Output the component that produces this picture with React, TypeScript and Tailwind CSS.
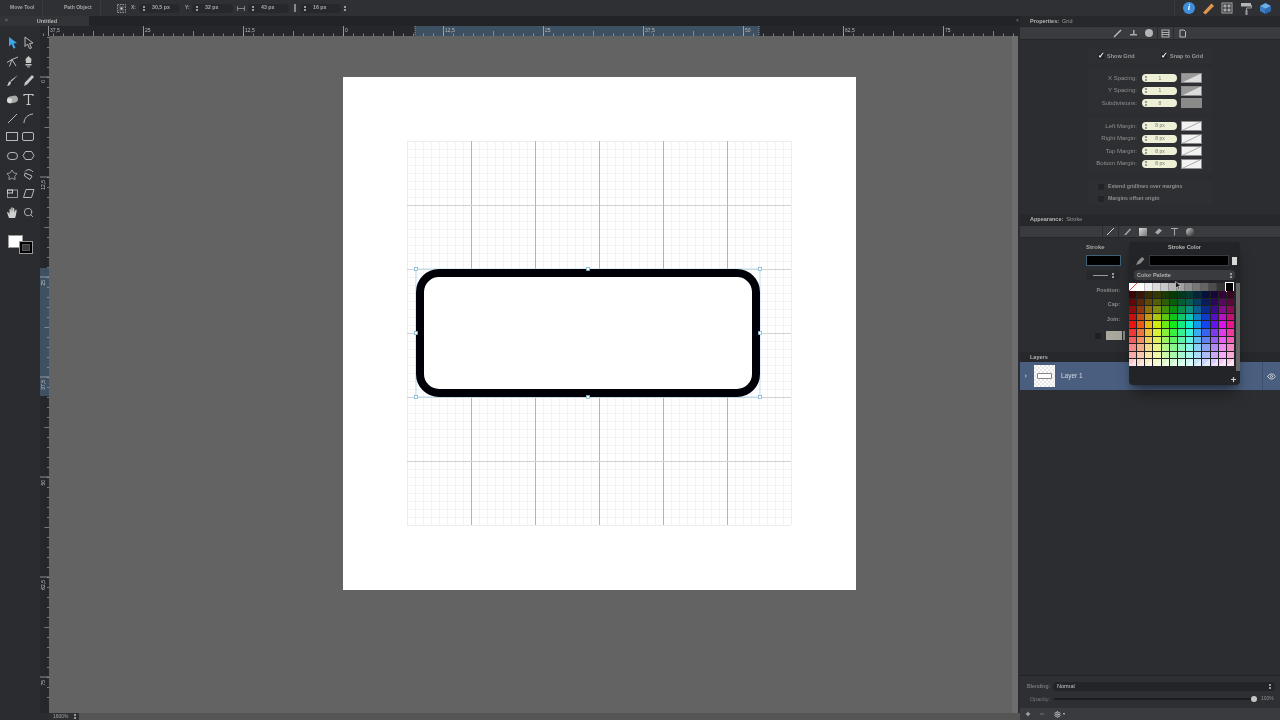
import { Search, Star, Eye, Plus, Minus, Settings, ChevronRight } from "lucide-react";
import type { ReactNode } from "react";

const font = "font-['Liberation_Sans',Arial,sans-serif]";

function Stepper({ className = "" }: { className?: string }) {
  return (
    <span className={`flex flex-col gap-[1px] ${className}`}>
      <span className="h-[2px] w-[2px] bg-[#9a9a9a]" />
      <span className="h-[2px] w-[2px] bg-[#9a9a9a]" />
    </span>
  );
}

function TopField({ value, width }: { value: string; width: string }) {
  return (
    <div className={`flex h-[9px] items-center rounded-sm bg-[#27282b] pl-1 ${width}`}>
      <Stepper />
      <span className="ml-[7px] text-[5.3px] font-bold text-[#a9a9a9]">{value}</span>
    </div>
  );
}

function TopBar() {
  return (
    <div className="flex h-4 items-center bg-[#2f3034] text-[5px] font-bold text-[#a5a5a5]">
      <span className="ml-[10px] w-[32px]">Move Tool</span>
      <span className="h-full w-px bg-[#3a3b3f]" />
      <span className="ml-[21px] w-[36px]">Path Object</span>
      <span className="h-full w-px bg-[#3a3b3f]" />
      <svg className="ml-4 h-[9px] w-[9px]" viewBox="0 0 9 9">
        <rect x=".5" y=".5" width="8" height="8" fill="none" stroke="#999" strokeDasharray="1.5 1" />
        <path d="M3 .5v8M6 .5v8M.5 3h8M.5 6h8" stroke="#777" strokeWidth=".5" />
        <rect x="3.5" y="3.5" width="2" height="2" fill="#ddd" />
      </svg>
      <span className="ml-[5px] w-[8px]">X:</span>
      <TopField value="30,5 px" width="w-[41px]" />
      <span className="ml-[5px] w-[7px]">Y:</span>
      <TopField value="32 px" width="w-[41px]" />
      <svg className="ml-1 mr-[3px] h-[5px] w-[8px]" viewBox="0 0 8 5" fill="none" stroke="#999" strokeWidth=".8"><path d="M.5 0v5M7.5 0v5M.5 2.5h7" /></svg>
      <TopField value="43 px" width="w-[41px]" />
      <span className="ml-[5px] h-[8px] w-[2px] bg-[#888]" />
      <span className="w-[4px]" />
      <TopField value="16 px" width="w-[41px]" />
      <Stepper className="ml-[3px]" />
      <div className="ml-auto flex h-full items-center">
        <span className="h-full w-px bg-[#3a3b3f]" />
        <span className="ml-2 flex h-[12px] w-[12px] items-center justify-center rounded-full bg-[#3f8fdf] font-['Liberation_Serif',serif] text-[9px] italic font-bold text-white">i</span>
        <svg className="ml-[7px] h-[13px] w-[13px]" viewBox="0 0 13 13">
          <path d="M1 10.5 9.5 1.5 12 4 3.5 12.5Z" fill="#df9650" />
        </svg>
        <svg className="ml-[6px] h-[12px] w-[12px]" viewBox="0 0 12 12" fill="none">
          <rect x="1" y="1" width="10" height="10" stroke="#aaa" />
          <rect x="2.5" y="2.5" width="3" height="3" fill="#aaa" />
          <rect x="6.5" y="2.5" width="3" height="3" fill="#aaa" />
          <rect x="2.5" y="6.5" width="3" height="3" fill="#aaa" />
          <rect x="6.5" y="6.5" width="3" height="3" fill="#aaa" />
        </svg>
        <svg className="ml-[7px] h-[13px] w-[13px]" viewBox="0 0 13 13">
          <rect x="1" y="1" width="10" height="3.5" fill="#b5b5b5" />
          <path d="M11.5 3v3H6.5v2" fill="none" stroke="#999" />
          <rect x="5.5" y="8" width="2" height="5" fill="#999" />
        </svg>
        <svg className="ml-[6px] mr-2 h-[13px] w-[13px]" viewBox="0 0 13 13">
          <path d="M6.5 1 12 4 6.5 7 1 4Z" fill="#6bb0ea" />
          <path d="M1 4v5l5.5 3V7Z" fill="#3a80c8" />
          <path d="M12 4v5l-5.5 3V7Z" fill="#2e6bb0" />
        </svg>
      </div>
    </div>
  );
}

function Tool({ children }: { children: ReactNode }) {
  return <div className="flex items-center justify-center text-[#b9b9b9]">{children}</div>;
}

function ToolBox() {
  const box = "h-[13px] w-[13px]";
  return (
    <div className="flex w-10 shrink-0 flex-col bg-[#2b2c30]">
      <div className="mt-[7px] ml-1 grid w-[32px] grid-cols-2 auto-rows-[18.9px]">
        <Tool>
          <svg className={box} viewBox="0 0 13 13"><path d="M3 1 11 7 7.5 7.5 9.5 12 7.5 12.5 5.5 8 3 10.5Z" fill="#3ea6e8" /></svg>
        </Tool>
        <Tool>
          <svg className={box} viewBox="0 0 13 13"><path d="M3 1 11 7 7.5 7.5 9.5 12 7.5 12.5 5.5 8 3 10.5Z" fill="none" stroke="#b9b9b9" /></svg>
        </Tool>
        <Tool>
          <svg className={box} viewBox="0 0 13 13" fill="none" stroke="#b9b9b9"><path d="M1 7.5 6 4.5 12 2M6 4.5 3.5 11.5M6 4.5 10 11" /></svg>
        </Tool>
        <Tool>
          <svg className={box} viewBox="0 0 13 13"><path d="M6.5 1 9.5 4 9 8H4L3.5 4Z" fill="#c4c4c4" /><rect x="3.5" y="9" width="6" height="1.5" fill="#c4c4c4" /><rect x="5" y="11.2" width="3" height="1.2" fill="#999" /></svg>
        </Tool>
        <Tool>
          <svg className={box} viewBox="0 0 13 13"><path d="M12 1 5.5 7.5 4.5 6.5ZM4 7 5 8C5 10.5 3 12 1 12 2 11 2 8 4 7Z" fill="#c8c8c8" /></svg>
        </Tool>
        <Tool>
          <svg className={box} viewBox="0 0 13 13"><path d="M10 1 12 3 5 10.5 2 12 3 8.5Z" fill="#c8c8c8" /></svg>
        </Tool>
        <Tool>
          <svg className={box} viewBox="0 0 13 13"><rect x="1" y="3" width="11" height="7" rx="3.5" fill="#a8a8a8" transform="rotate(-12 6.5 6.5)" /><circle cx="3.5" cy="7.5" r="2.5" fill="#dcdcdc" /></svg>
        </Tool>
        <Tool>
          <svg className={box} viewBox="0 0 13 13" fill="none" stroke="#c4c4c4" strokeWidth="1.2"><path d="M2 3V1.5H11V3M6.5 1.5V11.5M4.5 11.5H8.5" /></svg>
        </Tool>
        <Tool><svg className={box} viewBox="0 0 13 13" fill="none" stroke="#b9b9b9"><path d="M2 11 11 2" /></svg></Tool>
        <Tool><svg className={box} viewBox="0 0 13 13" fill="none" stroke="#b9b9b9"><path d="M2 11C2 6 6 2.5 11 2" /></svg></Tool>
        <Tool><span className="h-[9px] w-[12px] border border-[#b9b9b9]" /></Tool>
        <Tool><span className="h-[9px] w-[12px] rounded-[2px] border border-[#b9b9b9]" /></Tool>
        <Tool><span className="h-[8px] w-[11px] rounded-full border border-[#b9b9b9]" /></Tool>
        <Tool>
          <svg className={box} viewBox="0 0 13 13" fill="none" stroke="#b9b9b9"><path d="M1 6.5 3.5 2.5H9.5L12 6.5 9.5 10.5H3.5Z" /></svg>
        </Tool>
        <Tool><Star size={12} strokeWidth={1.5} /></Tool>
        <Tool>
          <svg className={box} viewBox="0 0 13 13" fill="none" stroke="#b9b9b9"><path d="M3 3.5C5 1 9 1 11 4M3 5 10 8 8 11.5 2.5 8Z" /></svg>
        </Tool>
        <Tool>
          <svg className={box} viewBox="0 0 13 13" fill="none" stroke="#999"><rect x="1.5" y="3" width="10" height="7.5" /><rect x="1.5" y="3" width="5" height="3" stroke="#ccc" /></svg>
        </Tool>
        <Tool>
          <svg className={box} viewBox="0 0 13 13" fill="none" stroke="#b9b9b9"><path d="M4 2.5H12L9.5 10.5H1.5Z" /></svg>
        </Tool>
        <Tool>
          <svg className={box} viewBox="0 0 13 13"><path d="M3 12 1 6.5 2 6 3.5 8V3L4.5 2.7 5.2 6V1.5L6.4 1.3 7 6V2L8.2 2.2 8.5 6.5 9.7 3.5 10.7 4 10 9 9 12Z" fill="#cfcfcf" /></svg>
        </Tool>
        <Tool><Search size={11} strokeWidth={2} /></Tool>
      </div>
      <div className="relative mt-[13px] ml-[8px] h-[19px] w-[26px]">
        <div className="h-[13px] w-[15px] border border-[#999] bg-white" />
        <div className="absolute left-[11px] top-[6px] h-[13px] w-[14px] border border-[#999] bg-black p-[2px]">
          <div className="h-full w-full border border-[#555] bg-[#3a3a3a]" />
        </div>
      </div>
    </div>
  );
}

const hMajors = [
  { x: 48, label: "37,5" },
  { x: 143, label: "25" },
  { x: 243, label: "12,5" },
  { x: 343, label: "0" },
  { x: 443, label: "12,5" },
  { x: 543, label: "25" },
  { x: 643, label: "37,5" },
  { x: 743, label: "50" },
  { x: 843, label: "62,5" },
  { x: 943, label: "75" },
];

function HRuler() {
  const ticks = Array.from({ length: 100 }, (_, i) => 43 + i * 10);
  return (
    <svg className={`block h-[10px] w-[1020px] ${font}`} viewBox="0 0 1020 10">
      <rect width="1020" height="10" fill="#26272b" />
      <rect x="415" width="344" height="10" fill="#3e5162" />
      {ticks.map((x) => (
        <line key={x} x1={x + 0.5} x2={x + 0.5} y1={(x - 43) % 100 === 50 ? 5 : 7.5} y2="10" stroke="#a8a8a8" strokeWidth="0.7" />
      ))}
      {hMajors.map((m) => (
        <g key={m.x}>
          <line x1={m.x + 0.5} x2={m.x + 0.5} y1="0" y2="10" stroke="#b0b0b0" strokeWidth="0.8" />
          <text x={m.x + 2} y="5.5" fontSize="5" fill="#bdbdbd">{m.label}</text>
        </g>
      ))}
      <line x1="415" x2="415" y1="0" y2="10" stroke="#999" strokeDasharray="1 1" />
      <line x1="759" x2="759" y1="0" y2="10" stroke="#999" strokeDasharray="1 1" />
    </svg>
  );
}

function VRuler() {
  const top = 36;
  const majors = [
    { y: 77, label: "0" },
    { y: 177, label: "12,5" },
    { y: 277, label: "25" },
    { y: 377, label: "37,5" },
    { y: 477, label: "50" },
    { y: 577, label: "62,5" },
    { y: 677, label: "75" },
  ];
  const ticks = Array.from({ length: 70 }, (_, i) => 7 + i * 10);
  return (
    <svg className={`block h-[677px] w-[9px] shrink-0 ${font}`} viewBox="0 0 9 677">
      <rect width="9" height="677" fill="#26272b" />
      <rect y={268 - top} width="9" height="128" fill="#3e5162" />
      {ticks.map((y) => (
        <line key={y} y1={y - top + 0.5} y2={y - top + 0.5} x1={(y - 77) % 100 === 50 ? 4.5 : 7} x2="9" stroke="#a0a0a0" strokeWidth="0.7" />
      ))}
      {majors.map((m) => (
        <g key={m.y}>
          <line y1={m.y - top} y2={m.y - top} x1="0" x2="9" stroke="#a8a8a8" strokeWidth="0.8" />
          <text x="0" y="0" fontSize="5" fill="#c0c0c0" textAnchor="end" transform={`translate(5 ${m.y - top + 3}) rotate(-90)`}>{m.label}</text>
        </g>
      ))}
    </svg>
  );
}

function Artboard() {
  const handles = [
    [416, 269], [588, 269], [760, 269],
    [416, 333], [760, 333],
    [416, 397], [588, 397], [760, 397],
  ];
  const ox = 343;
  const oy = 77;
  const minor = Array.from({ length: 49 }, (_, i) => i * 8);
  const major = [0, 64, 128, 192, 256, 320, 384];
  return (
    <div className="absolute left-[294px] top-[41px] h-[513px] w-[513px] bg-white">
      <svg className="block h-[513px] w-[513px]" viewBox="0 0 513 513">
        {minor.map((p) => (
          <g key={p} stroke="#f3f3f3" strokeWidth="1">
            <line x1={64 + p + 0.5} x2={64 + p + 0.5} y1="64" y2="448" />
            <line y1={64 + p + 0.5} y2={64 + p + 0.5} x1="64" x2="448" />
          </g>
        ))}
        {major.map((p, i) => (
          <g key={p} strokeWidth="1">
            <line x1={64 + p + 0.5} x2={64 + p + 0.5} y1="64" y2="448" stroke={i === 0 || i === 6 ? "#ededed" : "#b4b4b4"} />
            <line y1={64 + p + 0.5} y2={64 + p + 0.5} x1="64" x2="448" stroke={i === 0 || i === 6 ? "#ededed" : "#d2d2d2"} />
          </g>
        ))}
        <rect x={416 - ox} y={269 - oy} width="344" height="128" fill="none" stroke="#bfe0f2" strokeWidth="1" />
        <rect x={420 - ox} y={273 - oy} width="336" height="120" rx="19" fill="#ffffff" stroke="#000008" strokeWidth="8" />
        {handles.map(([x, y]) => (
          <rect key={`${x}-${y}`} x={x - ox - 1.5} y={y - oy - 1.5} width="3" height="3" fill="#ffffff" stroke="#7fb4d0" strokeWidth="0.8" />
        ))}
      </svg>
    </div>
  );
}

function SectionHeader({ title, sub, className = "" }: { title: string; sub?: string; className?: string }) {
  return (
    <div className={`flex items-center bg-[#27282b] pl-[10px] text-[5.5px] ${className}`}>
      <span className="font-bold text-[#b5b5b5]">{title}</span>
      {sub && <span className="ml-[3px] text-[#999]">{sub}</span>}
    </div>
  );
}

function SpacingRow({ label, value, swatch }: { label: string; value: string; swatch: "gray" | "line" | "solid" }) {
  return (
    <div className="flex h-[12.6px] items-center">
      <span className="w-[49px] whitespace-nowrap text-right text-[6px] text-[#8f8f8f]">{label}</span>
      <div className="ml-[5px] flex h-[8px] w-[35px] items-center rounded-full bg-[#eef0d6] pl-[3px]">
        <Stepper />
        <span className="flex-1 pr-[4px] text-center text-[5px] text-[#777]">{value}</span>
      </div>
      <svg className="ml-1 h-[10px] w-[21px]" viewBox="0 0 21 10">
        {swatch === "solid" && <rect width="21" height="10" fill="#8a8a8a" />}
        {swatch === "gray" && <rect width="21" height="10" fill="#dcdcdc" />}
        {swatch === "gray" && <path d="M0 0H21L0 10Z" fill="#9a9a9a" />}
        {swatch === "line" && <rect width="21" height="10" fill="#f2f2f2" />}
        {swatch === "line" && <path d="M0 10 21 0" stroke="#999" strokeWidth=".8" />}
        <rect x=".5" y=".5" width="20" height="9" fill="none" stroke="#8a8a8a" />
      </svg>
    </div>
  );
}

function CheckLabel({ label, gap }: { label: string; gap: string }) {
  return (
    <span className={`flex items-center whitespace-nowrap ${gap}`}>
      <span className="mr-[3px] flex h-[6px] w-[6px] items-center justify-center bg-[#232427] text-[8px] text-white">✓</span>
      {label}
    </span>
  );
}

function GridProperties() {
  return (
    <div className={`flex h-[174px] flex-col items-center pt-[9px] ${font}`}>
      <div className="flex h-[14px] w-[124px] items-center bg-[#2e2f32] pl-[10px] text-[5.5px] font-bold text-[#9a9a9a]">
        <CheckLabel label="Show Grid" gap="w-[63px]" />
        <CheckLabel label="Snap to Grid" gap="" />
      </div>
      <div className="mt-[6px] w-[124px] bg-[#2e2f32] py-[3px]">
        <SpacingRow label="X Spacing:" value="1" swatch="gray" />
        <SpacingRow label="Y Spacing:" value="1" swatch="gray" />
        <SpacingRow label="Subdivisions:" value="8" swatch="solid" />
      </div>
      <div className="mt-[4px] w-[124px] bg-[#2e2f32] py-[3px]">
        <SpacingRow label="Left Margin:" value="8 px" swatch="line" />
        <SpacingRow label="Right Margin:" value="8 px" swatch="line" />
        <SpacingRow label="Top Margin:" value="8 px" swatch="line" />
        <SpacingRow label="Bottom Margin:" value="8 px" swatch="line" />
      </div>
      <div className="mt-[8px] flex w-[124px] flex-col gap-[4px] bg-[#2e2f32] py-[2px] pl-[10px] text-[5.2px] font-bold text-[#8f8f8f]">
        <span className="flex items-center gap-[4px]"><span className="h-[6px] w-[6px] bg-[#232427]" />Extend gridlines over margins</span>
        <span className="flex items-center gap-[4px]"><span className="h-[6px] w-[6px] bg-[#232427]" />Margins offset origin</span>
      </div>
    </div>
  );
}

function PropertyTabs() {
  return (
    <div className="flex h-[14px] items-center justify-center gap-[7px] border-y border-[#252629] bg-[#3a3b3f] text-[#a8a8a8]">
      <svg className="h-[9px] w-[9px]" viewBox="0 0 9 9"><path d="M1 8 8 1" stroke="#bbb" strokeWidth="1.4" /></svg>
      <svg className="h-[9px] w-[9px]" viewBox="0 0 9 9"><path d="M4 1h1.5v4H8v1.5H1V5h3Z" fill="#aaa" /></svg>
      <span className="h-[8px] w-[8px] rounded-full bg-[#b5b5b5]" />
      <span className="-mx-[3px] flex h-[12px] items-center border-x border-[#2a2b2e] px-[3px]">
        <svg className="h-[9px] w-[9px]" viewBox="0 0 9 9" fill="none" stroke="#ccc" strokeWidth="0.8"><rect x="1" y="1" width="7" height="7" /><path d="M1 3.5h7M1 5.5h7" /></svg>
      </span>
      <svg className="h-[9px] w-[9px]" viewBox="0 0 9 9"><path d="M2 1h4l1.5 1.5V8H2Z" fill="none" stroke="#bbb" /></svg>
    </div>
  );
}

function AppearanceTabs() {
  return (
    <div className="flex h-[13px] items-center justify-center gap-[7px] border-y border-[#252629] bg-[#3a3b3f] pr-[1px]">
      <span className="-mx-[3px] flex h-[11px] items-center border-x border-[#2a2b2e] px-[3px]">
        <svg className="h-[9px] w-[9px]" viewBox="0 0 9 9"><path d="M1 8 8 1" stroke="#ccc" strokeWidth="1" /></svg>
      </span>
      <svg className="h-[9px] w-[9px]" viewBox="0 0 9 9"><path d="M1 8 7 1.5 8 2.5 3 8Z" fill="#aaa" /></svg>
      <span className="h-[8px] w-[8px] bg-gradient-to-br from-[#ddd] to-[#777]" />
      <svg className="h-[9px] w-[9px]" viewBox="0 0 9 9"><path d="M1 5.5 5 1.5 8 3.5 4 7.5Z" fill="#aaa" /></svg>
      <svg className="h-[9px] w-[9px]" viewBox="0 0 9 9" fill="none" stroke="#aaa"><path d="M1 1.5h7M4.5 1.5V8.5" /></svg>
      <span className="h-[8px] w-[8px] rounded-full bg-gradient-to-br from-[#ccc] to-[#333]" />
    </div>
  );
}

function StrokePanel() {
  const rowLabel = "w-[100px] text-right text-[5.5px] font-bold text-[#8a8a8a]";
  return (
    <div className={`flex h-[114px] flex-col pt-[5px] pl-[66px] ${font}`}>
      <span className="text-[6px] font-bold text-[#a5a5a5]">Stroke</span>
      <div className="mt-[3px] h-[11px] w-[35px] border border-[#3f6076] bg-black" />
      <div className="mt-[4px] flex h-[10px] w-[34px] items-center justify-center gap-[4px] rounded-sm bg-[#27282b]">
        <span className="h-px w-[15px] bg-[#999]" />
        <Stepper />
      </div>
      <div className="-ml-[66px] mt-[6px] flex flex-col">
        <span className={`${rowLabel} h-[14px]`}>Position:</span>
        <span className={`${rowLabel} h-[15px]`}>Cap:</span>
        <span className={`${rowLabel} h-[7px]`}>Join:</span>
      </div>
      <div className="mt-[9px] ml-[9px] flex items-center">
        <span className="h-[6px] w-[6px] bg-[#1f2023]" />
        <span className="ml-[5px] h-[9px] w-[16px] bg-[#a8a89c]" />
        <span className="ml-[1px] h-[9px] w-[2px] bg-[#8a8a80]" />
      </div>
    </div>
  );
}

const hues = [0, 20, 45, 68, 95, 122, 150, 172, 202, 226, 262, 296, 326];
const lights = [12, 20, 30, 42, 50, 58, 66, 75, 82, 88];
const grays = ["#ffffff", "#efefef", "#dcdcdc", "#c8c8c8", "#b4b4b4", "#a0a0a0", "#8c8c8c", "#787878", "#646464", "#4c4c4c", "#343434", "#1c1c1c"];

function ColorPopover() {
  return (
    <div className={`absolute left-[109px] top-[226px] flex h-[143px] w-[111px] flex-col rounded-sm bg-[#232427] shadow-lg shadow-black/40 ${font}`}>
      <div className="pt-[1px] h-[9px] text-center text-[5.5px] font-bold text-[#b8b8b8]">Stroke Color</div>
      <div className="mt-[4px] flex h-[11px] items-center pl-[6px]">
        <svg className="h-[11px] w-[11px]" viewBox="0 0 11 11"><path d="M1 10 3 6 7 2 9.5 4 5.5 8.5Z" fill="#8a8a8a" /></svg>
        <span className="ml-[3px] h-[11px] w-[80px] border border-[#3a3b3f] bg-black" />
        <span className="ml-[3px] h-[8px] w-[5px] bg-[#d8d8d8]" />
      </div>
      <div className="mx-[5px] mt-[4px] flex h-[10px] items-center justify-between rounded-sm bg-[#3a3b3f] px-[3px] text-[5.5px] font-bold text-[#b0b0b0]">
        Color Palette
        <Stepper />
      </div>
      <div className="mt-[3px] flex">
        <div className="w-[105px]">
          <div className="flex h-[8px]">
            <svg className="h-full w-[8.07px]" viewBox="0 0 8 8"><rect width="8" height="8" fill="#fff" /><path d="M0 8 8 0" stroke="#e44" /></svg>
            {grays.slice(0, 11).map((c) => (
              <span key={c} className="h-full w-[8.07px] border-r border-[#2a2a2a]/30" style={{ backgroundColor: c }} />
            ))}
            <span className="-mt-px h-[10px] w-[9px] border border-white bg-black" />
          </div>
          <div className="grid grid-cols-13 gap-px bg-[#222]">
            {lights.map((l, r) =>
              hues.map((h) => (
                <span key={`${r}-${h}`} className="relative h-[6.6px]" style={{ backgroundColor: `hsl(${h} 85% ${l}%)` }}>
                  {r === 9 && <span className="absolute inset-0 bg-[linear-gradient(to_bottom_right,transparent_50%,#ffffff80_50%)]" />}
                </span>
              )),
            )}
          </div>
        </div>
        <span className="ml-[2px] h-[88px] w-[4px] bg-[#666]" />
      </div>
      <Plus size={7} strokeWidth={4} className="mt-[5px] ml-[101px] text-[#cfcfcf]" />
    </div>
  );
}

function LayerRow() {
  return (
    <div className={`flex h-[28px] items-center bg-[#4a5f80] ${font}`}>
      <ChevronRight size={6} fill="#9ab" className="ml-[3px] text-[#9ab]" />
      <div className="ml-[5px] flex h-[22px] w-[21px] items-center justify-center bg-[repeating-conic-gradient(#e6e6e6_0_25%,#ffffff_0_50%)] bg-[length:4px_4px]">
        <span className="h-[6px] w-[15px] rounded-[1px] border border-[#888] bg-white" />
      </div>
      <span className="ml-[6px] text-[6.5px] text-[#d5d8df]">Layer 1</span>
      <span className="ml-auto h-full w-px bg-[#3d4f6b]" />
      <Eye size={9} strokeWidth={2.5} className="mx-[4px] text-[#c8ccd4]" />
    </div>
  );
}

function BlendFooter() {
  return (
    <div className={`flex flex-col ${font}`}>
      <div className="flex h-[33px] flex-col gap-[4px] border-t border-[#222] bg-[#2e2f32] pt-[6px]">
        <div className="flex items-center">
          <span className="w-[30px] text-right text-[5.5px] text-[#8f8f8f]">Blending:</span>
          <div className="ml-[3px] mr-[5px] flex h-[9px] flex-1 items-center justify-between rounded-sm bg-[#232427] px-[4px] text-[5.5px] text-[#c5c5c5]">
            Normal
            <Stepper />
          </div>
        </div>
        <div className="flex items-center">
          <span className="w-[30px] text-right text-[5.5px] text-[#777]">Opacity:</span>
          <div className="relative ml-[4px] h-[2px] w-[203px] bg-[#1c1d20]">
            <span className="absolute -top-[2px] right-0 h-[6px] w-[6px] rounded-full bg-[#c5c5c5]" />
          </div>
          <span className="ml-[4px] text-[5px] text-[#8f8f8f]">100%</span>
        </div>
      </div>
      <div className="flex h-[12px] items-center bg-[#3a3b3f] text-[#c8c8c8]">
        <Plus size={6} strokeWidth={4} className="ml-[5px]" />
        <Minus size={6} strokeWidth={3} className="ml-[8px] text-[#888]" />
        <Settings size={7} strokeWidth={3} className="ml-[9px]" />
        <span className="ml-[2px] text-[4px]">▾</span>
      </div>
    </div>
  );
}

function RightPanel() {
  return (
    <div className="relative flex w-[260px] shrink-0 flex-col bg-[#2c2d30]">
      <SectionHeader title="Properties:" sub="Grid" className="h-[10px]" />
      <PropertyTabs />
      <GridProperties />
      <SectionHeader title="Appearance:" sub="Stroke" className="h-[11px]" />
      <AppearanceTabs />
      <StrokePanel />
      <SectionHeader title="Layers" className="h-[10px]" />
      <LayerRow />
      <div className="flex-1" />
      <BlendFooter />
      <ColorPopover />
      <svg className="absolute left-[155px] top-[265px] h-[9px] w-[7px]" viewBox="0 0 6 7"><path d="M.5 0 5 4 3 4.2 4 6.5 3 7 2 4.5.5 6Z" fill="#111" stroke="#eee" strokeWidth=".5" /></svg>
    </div>
  );
}

export default function App() {
  return (
    <div className={`flex h-[720px] w-[1280px] flex-col overflow-hidden bg-[#2b2c30] blur-[0.4px] ${font}`}>
      <TopBar />
      <div className="flex min-h-0 flex-1">
        <div className="flex w-[1020px] shrink-0 flex-col">
          <div className="flex h-[10px] items-center bg-[#222327]">
            <div className="relative flex h-full w-[89px] items-center justify-center bg-[#333438] pl-[5px] text-[5.5px] font-bold text-[#b5b5b5]">
              <span className="absolute left-[5px] text-[5px] text-[#777]">×</span>
              Untitled
            </div>
            <span className="ml-auto mr-[1px] text-[5px] text-[#888]">×</span>
          </div>
          <div className="flex min-h-0 flex-1">
            <ToolBox />
            <div className="flex min-w-0 flex-1 flex-col">
              <div className="overflow-hidden">
                <div className="-ml-[40px]"><HRuler /></div>
              </div>
              <div className="flex min-h-0 flex-1">
                <VRuler />
                <div className="flex min-w-0 flex-1 flex-col">
                  <div className="flex min-h-0 flex-1">
                    <div className="relative flex-1 bg-[#636363]">
                      <Artboard />
                    </div>
                    <div className="mr-[2px] w-[6px] bg-[#6d6d6d]" />
                  </div>
                  <div className="flex h-[7px] items-center bg-[#2e2f32] text-[5px] text-[#a5a5a5]">
                    <span className="ml-[4px]">1600%</span>
                    <Stepper className="ml-[5px]" />
                    <div className="ml-[3px] h-full flex-1 bg-[#555]" />
                  </div>
                </div>
              </div>
            </div>
          </div>
        </div>
        <RightPanel />
      </div>
    </div>
  );
}
